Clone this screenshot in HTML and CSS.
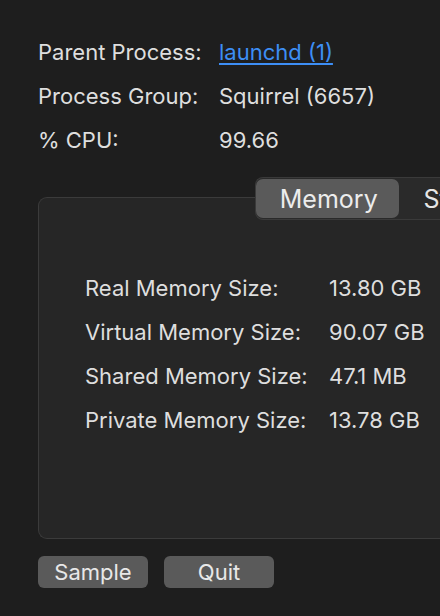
FILE: index.html
```html
<!DOCTYPE html>
<html>
<head>
<meta charset="utf-8">
<link rel="stylesheet" href="styles.css">
</head>
<body>
<div class="window">
  <div class="info">
    <div class="label">Parent Process:</div><div class="value"><a class="link" href="#">launchd (1)</a></div>
    <div class="label">Process Group:</div><div class="value">Squirrel (6657)</div>
    <div class="label">% CPU:</div><div class="value">99.66</div>
  </div>
  <div class="tabs">
    <div class="seg selected">Memory</div>
    <div class="seg">Statistics</div>
  </div>
  <div class="panel">
    <div class="mem">
      <div class="label">Real Memory Size:</div><div class="value">13.80 GB</div>
      <div class="label">Virtual Memory Size:</div><div class="value">90.07 GB</div>
      <div class="label">Shared Memory Size:</div><div class="value">47.1 MB</div>
      <div class="label">Private Memory Size:</div><div class="value">13.78 GB</div>
    </div>
  </div>
  <div class="buttons">
    <button class="btn">Sample</button>
    <button class="btn">Quit</button>
  </div>
</div>
</body>
</html>
```
FILE: styles.css
```css
html, body {
  margin: 0;
  padding: 0;
  background: #1e1e1e;
  width: 440px;
  height: 616px;
  overflow: hidden;
}
.window {
  font-family: Inter, "Noto Sans", sans-serif;
  font-size: 22px;
  color: #dedede;
  padding: 30px 0 0 38px;
  box-sizing: border-box;
  height: 616px;
}
.info {
  display: grid;
  grid-template-columns: 181px auto;
  grid-auto-rows: 44px;
  line-height: 44px;
  white-space: nowrap;
}
.link {
  color: #3d8ef5;
  text-decoration: underline;
  text-underline-offset: 3px;
  text-decoration-thickness: 1.5px;
}
.tabs {
  position: relative;
  z-index: 1;
  display: flex;
  margin: 15px 0 -23px 217px;
  height: 43px;
  box-sizing: border-box;
  border: 1px solid #3a3a3a;
  border-right: none;
  border-radius: 8px 0 0 8px;
  background: #2a2a2a;
  padding: 1px 0;
  width: 300px;
  white-space: nowrap;
}
.seg {
  line-height: 40px;
  font-size: 25px;
  padding: 0 24px;
  color: #e6e6e6;
}
.seg.selected {
  width: 145px;
  box-sizing: border-box;
  background: #5a5a5a;
  border-radius: 7px;
  text-align: center;
  padding: 0 0 0 2px;
  color: #ececec;
}
.panel {
  height: 342px;
  box-sizing: border-box;
  border: 1px solid #3b3b3b;
  border-right: none;
  border-radius: 9px 0 0 9px;
  background: #262626;
  padding: 68px 0 0 46px;
}
.mem {
  display: grid;
  grid-template-columns: 244px auto;
  grid-auto-rows: 44px;
  line-height: 44px;
  white-space: nowrap;
}
.buttons {
  display: flex;
  gap: 16px;
  margin-top: 17px;
}
.btn {
  width: 110px;
  height: 32px;
  border: none;
  border-radius: 6px;
  background: #5a5a5a;
  color: #e8e8e8;
  font-family: Inter, "Noto Sans", sans-serif;
  font-size: 22px;
  padding: 0;
  line-height: 32px;
}
```
